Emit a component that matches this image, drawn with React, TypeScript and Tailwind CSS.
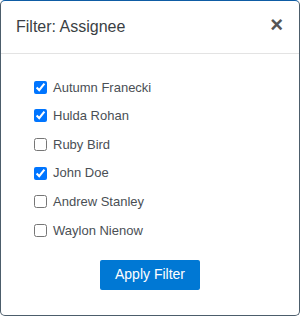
import React, { useState } from 'react';

const people = [
  { name: 'Autumn Franecki', checked: true },
  { name: 'Hulda Rohan', checked: true },
  { name: 'Ruby Bird', checked: false },
  { name: 'John Doe', checked: true },
  { name: 'Andrew Stanley', checked: false },
  { name: 'Waylon Nienow', checked: false },
];

export default function App() {
  const [items, setItems] = useState(people);

  const toggle = (i: number) =>
    setItems(prev => prev.map((p, j) => (j === i ? { ...p, checked: !p.checked } : p)));

  return (
    <div className="w-[300px] h-[316px] bg-white font-['Liberation_Sans',Arial,sans-serif]">
      <div className="h-full flex flex-col rounded-[5px] border border-[#4c5d6b] border-t-[#0e5ca4] bg-white overflow-hidden">
        {/* Header */}
        <div className="h-[53px] shrink-0 flex items-center justify-between pl-[15px] pr-[15px] border-b border-[#e3e3e3]">
          <h2 className="text-[16px] text-[#3a3f44] leading-none -mt-[1px]">Filter: Assignee</h2>
          <button className="text-[22px] font-bold text-[#555] leading-none -mt-[5px] mr-[1px]">×</button>
        </div>

        {/* Options */}
        <div className="flex flex-col pt-[19px] pl-[33px]">
          {items.map((p, i) => (
            <label key={p.name} className="h-[28.6px] flex items-center gap-[6px] text-[13px] text-[#4a4f55] cursor-pointer">
              <input
                type="checkbox"
                checked={p.checked}
                onChange={() => toggle(i)}
                className="w-[13px] h-[13px]"
              />
              <span>{p.name}</span>
            </label>
          ))}
        </div>

        {/* Footer */}
        <div className="flex justify-center pt-[15px]">
          <button className="h-[30px] px-[15px] rounded-[2px] bg-[#0078d4] text-white text-[14px]">
            Apply Filter
          </button>
        </div>
      </div>
    </div>
  );
}
